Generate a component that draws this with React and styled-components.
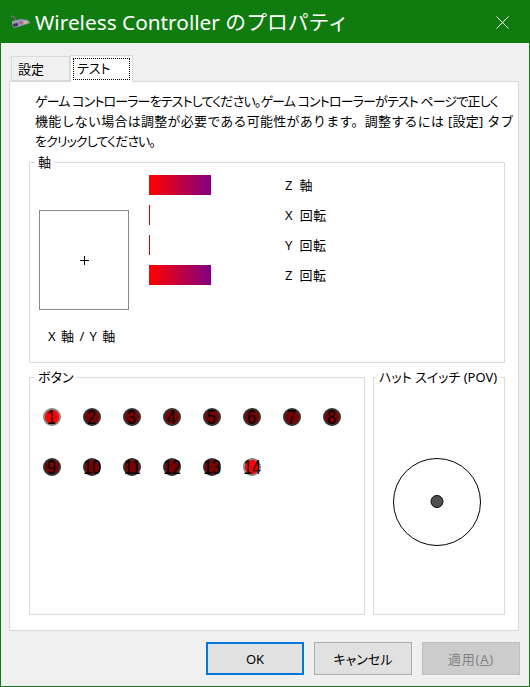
import React from 'react';
import styled, { createGlobalStyle } from 'styled-components';

const JP = `"Noto Sans", "Noto Sans CJK JP", sans-serif`;

const topButtons = [1, 2, 3, 4, 5, 6, 7, 8];
const bottomButtons = [9, 10, 11, 12, 13, 14];
const pressed = [1, 14];
const axes = [
  { label: 'Z 軸', full: true },
  { label: 'X 回転', full: false },
  { label: 'Y 回転', full: false },
  { label: 'Z 回転', full: true },
];

function GamepadIcon() {
  return (
    <svg width="24" height="16" viewBox="0 0 24 16">
      <path d="M0.5 2 L4 3 L6 6" stroke="#6a6a72" strokeWidth="1.5" fill="none" />
      <path d="M2 7 L11 5 L18 6 L20.5 9 L14 11 L8 13 L4 14 L2 11 Z" fill="#9a96b4" />
      <path d="M2.5 10 L8 9 L8 12 L4 13 Z" fill="#3d3560" />
      <path d="M9 8 L12 7.5 L13 9 L10 10 Z" fill="#c04a6a" />
      <path d="M13 7 L17 7 L18 9 L14.5 10 Z" fill="#b8c890" />
    </svg>
  );
}

function CloseIcon() {
  return (
    <svg width="13" height="13" viewBox="0 0 13 13">
      <path d="M0.5 0.5 L12.5 12.5 M12.5 0.5 L0.5 12.5" stroke="#fff" strokeWidth="1" fill="none" />
    </svg>
  );
}

function CrossMark() {
  return (
    <svg width="9" height="9" viewBox="0 0 9 9">
      <path d="M0 4.5 H9 M4.5 0 V9" stroke="#000" strokeWidth="1" fill="none" />
    </svg>
  );
}

function HatDial() {
  return (
    <svg width="88" height="88" viewBox="0 0 88 88">
      <circle cx="44" cy="44" r="43.5" fill="#fff" stroke="#000" strokeWidth="1" />
      <circle cx="44" cy="43.5" r="6" fill="#505050" stroke="#000" strokeWidth="1" />
    </svg>
  );
}

function App() {
  return (
    <Page>
      <GlobalStyle />
      <TitleBar>
        <TitleLeft>
          <GamepadIcon />
          <Title>Wireless Controller のプロパティ</Title>
        </TitleLeft>
        <CloseIcon />
      </TitleBar>

      <Body>
        <Tabs>
          <Tab>設定</Tab>
          <Tab $active><TabFocus>テスト</TabFocus></Tab>
        </Tabs>

        <Panel>
          <Intro>
            <IntroLine $palt $tracking={-0.85}>ゲーム コントローラーをテストしてください。ゲーム コントローラーがテスト ページで正しく</IntroLine>
            <IntroLine $tracking={0.25}>機能しない場合は調整が必要である可能性があります。調整するには [設定] タブ</IntroLine>
            <IntroLine $palt $tracking={-0.9}>をクリックしてください。</IntroLine>
          </Intro>

          <AxisGroup>
            <Legend>軸</Legend>
            <StickColumn>
              <StickBox><CrossMark /></StickBox>
              <StickLabel>X 軸 / Y 軸</StickLabel>
            </StickColumn>
            <AxisRows>
              {axes.map((axis) => (
                <AxisRow key={axis.label}>
                  <BarSlot>
                    <Bar $full={axis.full} />
                  </BarSlot>
                  <AxisLabel>{axis.label}</AxisLabel>
                </AxisRow>
              ))}
            </AxisRows>
          </AxisGroup>

          <BottomRow>
            <ButtonGroup>
              <Legend>ボタン</Legend>
              <LampRow>
                {topButtons.map((n) => (
                  <Lamp key={n} $on={pressed.includes(n)}><LampNumber>{n}</LampNumber></Lamp>
                ))}
              </LampRow>
              <LampRow>
                {bottomButtons.map((n) => (
                  <Lamp key={n} $on={pressed.includes(n)}><LampNumber>{n}</LampNumber></Lamp>
                ))}
              </LampRow>
            </ButtonGroup>
            <HatGroup>
              <Legend $tight>ハット スイッチ (POV)</Legend>
              <HatDial />
            </HatGroup>
          </BottomRow>
        </Panel>

        <Footer>
          <DialogButton $focused>OK</DialogButton>
          <DialogButton>キャンセル</DialogButton>
          <DialogButton $disabled>適用(<u>A</u>)</DialogButton>
        </Footer>
      </Body>
    </Page>
  );
}

const GlobalStyle = createGlobalStyle`
  html, body {
    margin: 0;
    padding: 0;
    background: #f0f0f0;
  }
`;

const Page = styled.div`
  width: 530px;
  height: 687px;
  box-sizing: border-box;
  border: 1px solid #107c10;
  display: flex;
  flex-direction: column;
  font-family: ${JP};
  font-size: 13px;
  font-feature-settings: "palt";
  color: #000;
  background: #f0f0f0;
  overflow: hidden;
`;

const TitleBar = styled.div`
  height: 42px;
  flex: none;
  background: #107c10;
  color: #fff;
  display: flex;
  align-items: center;
  justify-content: space-between;
  padding: 0 20px 0 9px;
`;

const TitleLeft = styled.div`
  display: flex;
  align-items: center;
  gap: 1px;
`;

const Title = styled.span`
  font-size: 20.8px;
  line-height: 26px;
  white-space: nowrap;
  font-feature-settings: normal;
`;

const Body = styled.div`
  flex: 1;
  display: flex;
  flex-direction: column;
  padding: 11px 9px 0 8px;
`;

const Tabs = styled.div`
  display: flex;
  align-items: flex-end;
  height: 27px;
  padding-left: 2px;
  gap: 1px;
  position: relative;
  z-index: 1;
`;

const Tab = styled.div`
  box-sizing: border-box;
  height: ${(p) => (p.$active ? '27px' : '25px')};
  width: ${(p) => (p.$active ? '63px' : '59px')};
  margin-bottom: ${(p) => (p.$active ? '-1px' : '0')};
  margin-right: ${(p) => (p.$active ? '0' : '-1px')};
  border: 1px solid #d9d9d9;
  border-bottom: ${(p) => (p.$active ? 'none' : '1px solid #d9d9d9')};
  background: ${(p) => (p.$active ? '#fff' : '#f0f0f0')};
  padding: ${(p) => (p.$active ? '2px' : '3px 0 0 6px')};
  line-height: 18px;
`;

const TabFocus = styled.div`
  height: 22px;
  border: 1px dotted #000;
  box-sizing: border-box;
  padding-left: 3px;
  line-height: 18px;
`;

const Panel = styled.div`
  box-sizing: border-box;
  width: 510px;
  height: 550px;
  flex: none;
  background: #fff;
  border: 1px solid #d9d9d9;
  padding: 9px 13px 0 19px;
  display: flex;
  flex-direction: column;
`;

const Intro = styled.div`
  margin: 0 0 0 6px;
  height: 71px;
  flex: none;
`;

const IntroLine = styled.div`
  line-height: 20px;
  white-space: nowrap;
  letter-spacing: ${(p) => p.$tracking}px;
  font-feature-settings: ${(p) => (p.$palt ? '"palt"' : 'normal')};
`;

const Group = styled.div`
  box-sizing: border-box;
  position: relative;
  border: 1px solid #dcdcdc;
`;

const Legend = styled.span`
  position: absolute;
  top: -9px;
  left: ${(p) => (p.$tight ? '2px' : '5px')};
  padding: 0 3px;
  background: #fff;
  line-height: 16px;
  white-space: nowrap;
`;

const AxisGroup = styled(Group)`
  height: 201px;
  flex: none;
  display: flex;
  padding: 12px 0 0 9px;
`;

const StickColumn = styled.div`
  width: 110px;
  flex: none;
  padding-top: 35px;
`;

const StickBox = styled.div`
  box-sizing: border-box;
  width: 90px;
  height: 100px;
  border: 1px solid #888890;
  display: flex;
  align-items: center;
  justify-content: center;
`;

const StickLabel = styled.div`
  margin: 17px 0 0 9px;
  line-height: 18px;
  white-space: nowrap;
  word-spacing: 2px;
`;

const AxisRows = styled.div`
  display: flex;
  flex-direction: column;
  gap: 10px;
`;

const AxisRow = styled.div`
  display: flex;
  align-items: center;
  height: 20px;
`;

const BarSlot = styled.div`
  width: 136px;
  flex: none;
`;

const Bar = styled.div`
  width: ${(p) => (p.$full ? '62px' : '1px')};
  height: 20px;
  background: ${(p) => (p.$full ? 'linear-gradient(to right, #ff0000, #800080)' : '#e00000')};
`;

const AxisLabel = styled.span`
  line-height: 20px;
  white-space: nowrap;
  word-spacing: 3px;
  letter-spacing: 0.4px;
`;

const BottomRow = styled.div`
  display: flex;
  gap: 8px;
  margin-top: 14px;
`;

const ButtonGroup = styled(Group)`
  width: 336px;
  height: 238px;
  flex: none;
  padding: 30px 0 0 13px;
  display: flex;
  flex-direction: column;
  gap: 32px;
`;

const LampRow = styled.div`
  display: flex;
  gap: 22px;
`;

const Lamp = styled.div`
  box-sizing: border-box;
  width: 18px;
  height: 18px;
  border-radius: 50%;
  border: 2px solid ${(p) => (p.$on ? '#858585' : '#333333')};
  background: ${(p) => (p.$on ? '#ff0000' : '#7b0000')};
  display: flex;
  align-items: center;
  justify-content: center;
`;

const LampNumber = styled.span`
  font-family: "Liberation Sans", sans-serif;
  font-size: 20px;
  line-height: 16px;
  color: #000;
  transform: scaleX(0.8);
  white-space: nowrap;
`;

const HatGroup = styled(Group)`
  width: 132px;
  height: 238px;
  flex: none;
  display: flex;
  align-items: flex-start;
  justify-content: center;
  padding: 80px 4px 0 0;
`;

const Footer = styled.div`
  display: flex;
  justify-content: flex-end;
  gap: 10px;
  margin-top: 11px;
`;

const DialogButton = styled.div`
  box-sizing: border-box;
  width: 98px;
  height: 33px;
  display: flex;
  align-items: center;
  justify-content: center;
  font-size: 13px;
  letter-spacing: ${(p) => (p.$disabled ? '0.8px' : '0')};
  background: ${(p) => (p.$disabled ? '#cccccc' : '#e1e1e1')};
  color: ${(p) => (p.$disabled ? '#838383' : '#000')};
  border: ${(p) => (p.$focused ? '2px solid #0078d7' : p.$disabled ? '1px solid #bfbfbf' : '1px solid #adadad')};
`;

export default App;
